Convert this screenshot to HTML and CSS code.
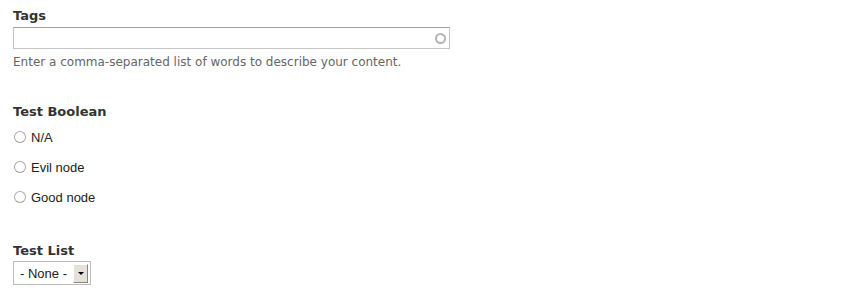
FILE: index.html
```html
<!DOCTYPE html>
<html>
<head>
<meta charset="utf-8">
<link rel="stylesheet" href="styles.css">
</head>
<body>
<form class="form">
  <div class="field">
    <label class="label" for="tags">Tags</label>
    <div class="autocomplete">
      <input id="tags" class="text" type="text">
      <span class="throbber"></span>
    </div>
    <div class="desc">Enter a comma-separated list of words to describe your content.</div>
  </div>

  <div class="field field-radios">
    <div class="label">Test Boolean</div>
    <label class="radio"><input type="radio" name="b"><span>N/A</span></label>
    <label class="radio"><input type="radio" name="b"><span>Evil node</span></label>
    <label class="radio"><input type="radio" name="b"><span>Good node</span></label>
  </div>

  <div class="field field-list">
    <label class="label" for="list">Test List</label>
    <div class="select">
      <span class="select-value">- None -</span>
      <span class="select-btn"><span class="tri"></span></span>
    </div>
  </div>
</form>
</body>
</html>
```

FILE: styles.css
```css
html, body {
  margin: 0;
  padding: 0;
  background: #fff;
}
body {
  padding: 7px 13px 0;
  font-family: "DejaVu Sans", sans-serif;
  color: #333;
}
.form {
  display: flex;
  flex-direction: column;
}
.label {
  display: block;
  font-weight: bold;
  font-size: 13px;
  line-height: 17px;
  color: #333;
  margin-bottom: 3px;
}
.autocomplete {
  display: flex;
  align-items: center;
  width: 435px;
  height: 20px;
  border: 1px solid #c4c4c4;
  border-top-color: #a0a0a0;
}
.text {
  flex: 1;
  border: 0;
  outline: none;
  height: 20px;
  padding: 0 4px;
  font: 13px "DejaVu Sans", sans-serif;
  background: transparent;
}
.throbber {
  width: 7px;
  height: 7px;
  border: 2px solid #b4b4b4;
  border-radius: 50%;
  margin-right: 3px;
}
.desc {
  font-size: 12px;
  line-height: 16px;
  color: #666;
  margin-top: 5px;
}
.field-radios {
  margin-top: 33px;
  display: flex;
  flex-direction: column;
}
.field-radios .label {
  margin-bottom: 2px;
}
.radio {
  display: flex;
  align-items: center;
  height: 30px;
  font-family: "Liberation Sans", Arial, sans-serif;
  font-size: 13px;
  color: #222;
}
.radio input {
  appearance: none;
  -webkit-appearance: none;
  width: 12px;
  height: 12px;
  margin: 0 5px 0 1px;
  border: 1px solid #aaa;
  border-bottom-color: #b09a88;
  border-radius: 50%;
  background: #fff;
}
.field-list {
  margin-top: 30px;
}
.field-list .label {
  margin-bottom: 2px;
}
.select {
  display: inline-flex;
  align-items: center;
  width: 76px;
  height: 22px;
  border: 1px solid #bbb;
  font-family: "Liberation Sans", Arial, sans-serif;
  font-size: 13px;
  color: #222;
  background: #fff;
}
.select-value {
  padding-left: 6px;
  flex: 1;
}
.select-btn {
  width: 13px;
  height: 17px;
  margin-right: 2px;
  background: #e6e0da;
  border: 1px solid #fff;
  border-right-color: #8a8580;
  border-bottom-color: #8a8580;
  display: flex;
  align-items: center;
  justify-content: center;
}
.tri {
  width: 0;
  height: 0;
  border-left: 3px solid transparent;
  border-right: 3px solid transparent;
  border-top: 3px solid #000;
}
```
